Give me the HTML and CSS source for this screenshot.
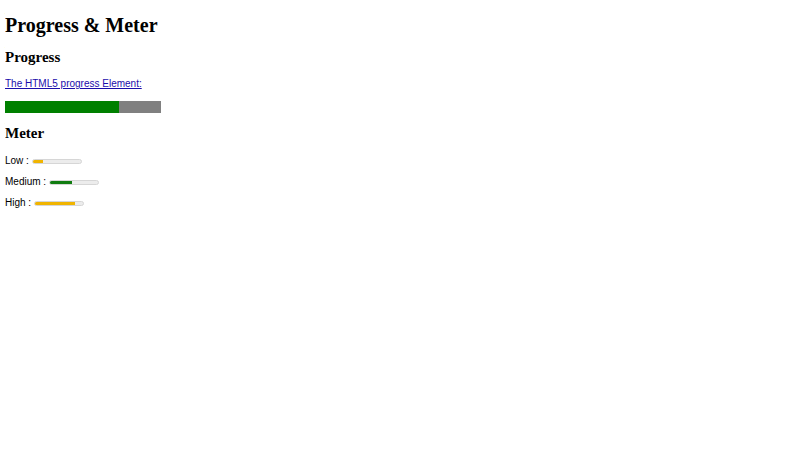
FILE: index.html
```html
<!DOCTYPE html>
<html lang="en">
<head>
<meta charset="utf-8">
<title>Progress &amp; Meter</title>
<link rel="stylesheet" href="styles.css">
</head>
<body>
  <h1 class="title">Progress &amp; Meter</h1>

  <h2 class="section">Progress</h2>
  <p class="note"><a href="#" class="link">The HTML5 progress Element:</a></p>
  <div class="progress"><div class="progress-fill" style="width: 73%"></div></div>

  <h2 class="section meter-title">Meter</h2>
  <p class="meter-row first">Low : <span class="meter"><span class="meter-fill low" style="width: 22%"></span></span></p>
  <p class="meter-row">Medium : <span class="meter"><span class="meter-fill mid" style="width: 45%"></span></span></p>
  <p class="meter-row">High : <span class="meter"><span class="meter-fill high" style="width: 84%"></span></span></p>
</body>
</html>
```
FILE: styles.css
```css
body {
  margin: 5px;
  font-family: "Liberation Sans", Arial, sans-serif;
  font-size: 10px;
  color: #000;
  background: #fff;
}

.title {
  font-family: "Liberation Serif", "Times New Roman", serif;
  font-size: 20px;
  font-weight: bold;
  line-height: 24px;
  margin: 8px 0 0;
}

.section {
  font-family: "Liberation Serif", "Times New Roman", serif;
  font-size: 15px;
  font-weight: bold;
  line-height: 18px;
  margin: 11px 0 0;
}

.note {
  margin: 12px 0 0;
  line-height: 12px;
}

.link {
  color: #1a0dab;
}

.progress {
  width: 156px;
  height: 12px;
  margin-top: 11px;
  background: #808080;
}

.progress-fill {
  height: 100%;
  background: #008000;
}

.meter-row {
  margin: 9px 0 0;
  line-height: 12px;
}

.meter-row.first {
  margin-top: 13px;
}

.meter {
  display: inline-block;
  box-sizing: border-box;
  width: 50px;
  height: 5px;
  background: #ececec;
  border: 1px solid #d6d6d6;
  border-radius: 3px;
  overflow: hidden;
  vertical-align: baseline;
}

.meter-fill {
  display: block;
  height: 100%;
}

.meter-fill.low,
.meter-fill.high {
  background: #f0b400;
}

.meter-fill.mid {
  background: #107c10;
}
```
